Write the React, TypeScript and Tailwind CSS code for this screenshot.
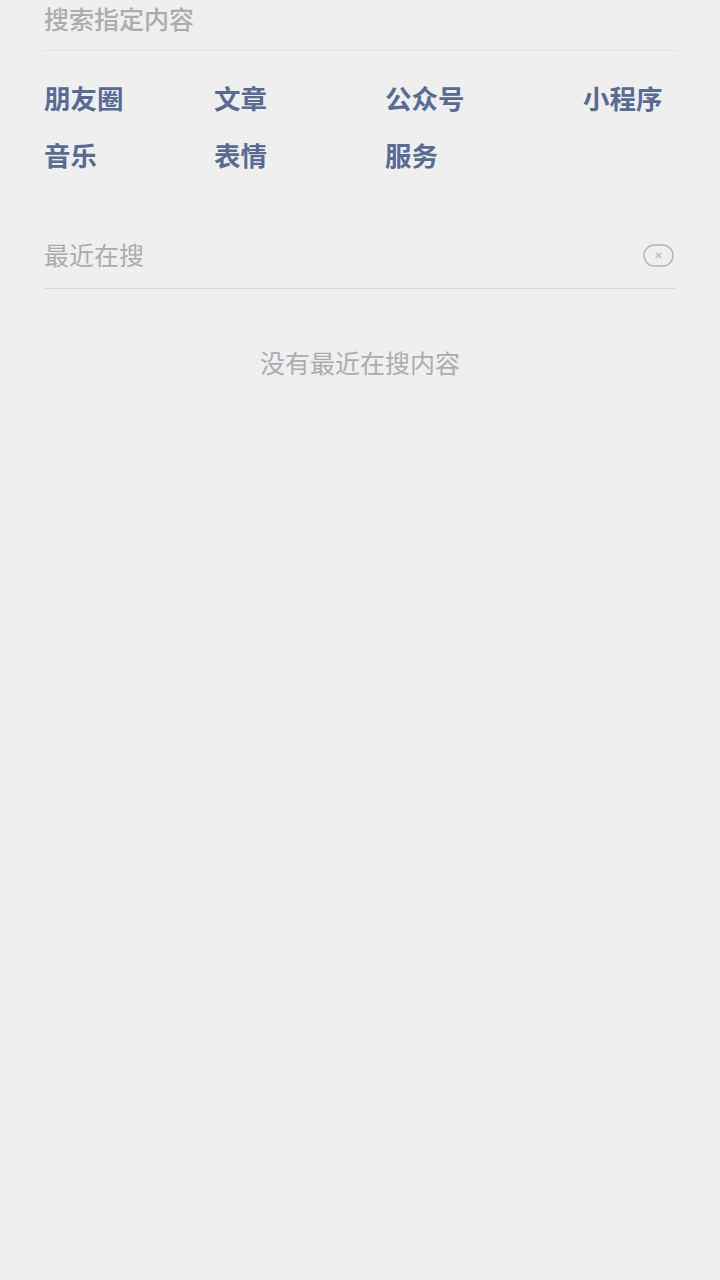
const cjk = "font-['Noto_Sans_CJK_SC','Liberation_Sans',sans-serif]";

function Link({ text, className }: { text: string; className: string }) {
  return <div className={"text-[26.5px] leading-[38px] font-bold text-[#576b95] " + className}>{text}</div>;
}

function ClearIcon() {
  return (
    <svg width="31" height="23" viewBox="0 0 31 23" fill="none" stroke="#b4b4b4">
      <rect x="1" y="1" width="29" height="21" rx="10.5" strokeWidth="1.4" />
      <path d="M12.8 8.8l5.4 5.4M18.2 8.8l-5.4 5.4" strokeWidth="1.2" />
    </svg>
  );
}

export default function App() {
  return (
    <div className={"w-[720px] h-[1280px] overflow-hidden bg-[#efeff0] px-11 " + cjk}>
      <div className="h-[51px] border-b border-[#e0e0e0] text-[25px] leading-[36px] font-medium text-[#acacac]">
        搜索指定内容
      </div>

      <div className="mt-[28px] flex">
        <Link text="朋友圈" className="w-[170px]" />
        <Link text="文章" className="w-[171px]" />
        <Link text="公众号" className="w-[198px]" />
        <Link text="小程序" className="" />
      </div>
      <div className="mt-[19px] flex">
        <Link text="音乐" className="w-[170px]" />
        <Link text="表情" className="w-[171px]" />
        <Link text="服务" className="w-[198px]" />
      </div>

      <div className="mt-[58px] flex h-[57px] items-start justify-between border-b border-[#dadada] pr-[2px] pt-[4px]">
        <div className="text-[25px] leading-[36px] text-[#acacac]">最近在搜</div>
        <div className="mt-[8px]">
          <ClearIcon />
        </div>
      </div>

      <div className="mt-[55px] text-center text-[25px] leading-[36px] text-[#acacac]">没有最近在搜内容</div>
    </div>
  );
}
